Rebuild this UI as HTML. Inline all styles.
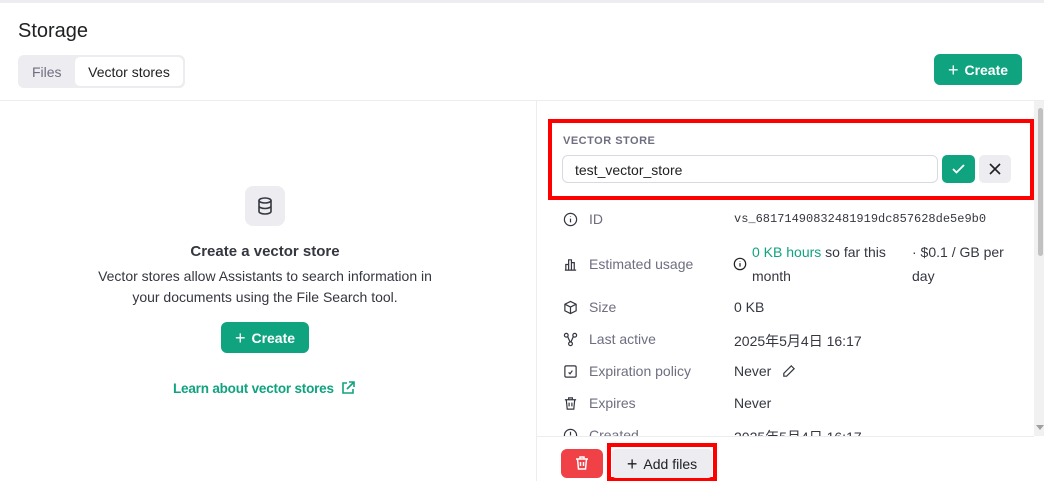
<!DOCTYPE html>
<html><head><meta charset="utf-8"><style>
*{box-sizing:border-box;margin:0;padding:0}
body{width:1044px;height:481px;overflow:hidden;background:#fff;font-family:"Liberation Sans","Noto Sans CJK JP",sans-serif;color:#202123;position:relative}
.a{position:absolute}
.btn{background:#10a37f;color:#fff;border-radius:6px;font-size:14px;font-weight:bold;display:flex;align-items:center;justify-content:center}
.lbl{position:absolute;left:589px;font-size:14px;color:#6e6e80}
.val{position:absolute;left:734px;font-size:14px;color:#353740}
.ic{position:absolute;left:563px;width:15px;height:15px}
</style></head><body>
<div class="a" style="left:0;top:0;width:1044px;height:3px;background:#ececf1"></div>
<div class="a" style="left:18px;top:20px;font-size:20px;color:#202123">Storage</div>
<div class="a" style="left:18px;top:55px;width:167px;height:33px;background:#ececf1;border-radius:6px"></div>
<div class="a" style="left:32px;top:64px;font-size:14px;color:#6e6e80">Files</div>
<div class="a" style="left:75px;top:57px;width:108px;height:29px;background:#fff;border-radius:5px;font-size:14px;color:#202123;display:flex;align-items:center;justify-content:center">Vector stores</div>
<div class="a btn" style="left:934px;top:54px;width:88px;height:31px"><span style="font-size:18px;font-weight:normal;margin-right:6px;line-height:18px">+</span>Create</div>
<div class="a" style="left:0;top:100px;width:1044px;height:1px;background:#ececf1"></div>
<div class="a" style="left:536px;top:101px;width:1px;height:380px;background:#ececf1"></div>
<div class="a" style="left:245px;top:186px;width:40px;height:40px;background:#ececf1;border-radius:8px"></div>
<svg class="a" style="left:255px;top:196px" width="20" height="20" viewBox="0 0 20 20" fill="none" stroke="#353740" stroke-width="1.6"><ellipse cx="10" cy="4.5" rx="6" ry="2.5"/><path d="M4 4.5v11c0 1.4 2.7 2.5 6 2.5s6-1.1 6-2.5v-11M4 10c0 1.4 2.7 2.5 6 2.5s6-1.1 6-2.5"/></svg>
<div class="a" style="left:0;top:243px;width:530px;text-align:center;font-size:15px;font-weight:bold;color:#353740">Create a vector store</div>
<div class="a" style="left:0;top:266px;width:530px;text-align:center;font-size:14px;line-height:21px;color:#353740">Vector stores allow Assistants to search information in<br>your documents using the File Search tool.</div>
<div class="a btn" style="left:221px;top:322px;width:88px;height:31px"><span style="font-size:18px;font-weight:normal;margin-right:6px;line-height:18px">+</span>Create</div>
<div class="a" style="left:173px;top:381px;font-size:13.5px;font-weight:bold;color:#10a37f;letter-spacing:-0.2px">Learn about vector stores</div>
<svg class="a" style="left:341px;top:381px" width="14" height="14" viewBox="0 0 14 14" fill="none" stroke="#10a37f" stroke-width="1.6"><path d="M6 2H2v10h10V8M8 1h5v5M13 1L6 8"/></svg>
<div class="a" style="left:548px;top:119px;width:486px;height:81px;border:4px solid #f00"></div>
<div class="a" style="left:563px;top:135px;font-size:11px;font-weight:bold;color:#6e6e80;letter-spacing:0.5px">VECTOR STORE</div>
<div class="a" style="left:562px;top:155px;width:376px;height:28px;border:1px solid #d9d9e3;border-radius:6px;font-size:14px;padding:6px 12px;color:#202123">test_vector_store</div>
<div class="a" style="left:942px;top:155px;width:33px;height:28px;background:#10a37f;border-radius:5px"></div>
<svg class="a" style="left:951px;top:162px" width="15" height="14" viewBox="0 0 15 14" fill="none" stroke="#fff" stroke-width="1.8"><path d="M2 7l3.5 3.5L13 3"/></svg>
<div class="a" style="left:979px;top:155px;width:32px;height:28px;background:#ececf1;border-radius:5px"></div>
<svg class="a" style="left:989px;top:163px" width="12" height="12" viewBox="0 0 12 12" stroke="#202123" stroke-width="1.6"><path d="M1 1l10 10M11 1L1 11"/></svg>

<svg class="ic" style="top:212px" viewBox="0 0 16 16" fill="none" stroke="#353740" stroke-width="1.3"><circle cx="8" cy="8" r="6.5"/><path d="M8 7v4M8 4.5v.5"/></svg>
<div class="lbl" style="top:211px">ID</div>
<div class="val" style="top:212px;font-family:'Liberation Mono',monospace;font-size:12px">vs_68171490832481919dc857628de5e9b0</div>

<svg class="ic" style="top:257px" viewBox="0 0 16 16" fill="none" stroke="#353740" stroke-width="1.3"><path d="M2 14h12M3 14V8h3v6M6 14V3h3v11M9 14V6h3v8"/></svg>
<div class="lbl" style="top:256px">Estimated usage</div>
<svg class="a" style="left:733px;top:257px" width="14" height="14" viewBox="0 0 16 16" fill="none" stroke="#202123" stroke-width="1.4"><circle cx="8" cy="8" r="6.5"/><path d="M8 7v4M8 4.5v.5"/></svg>
<div class="a" style="left:752px;top:240px;font-size:14px;line-height:24px;color:#353740;width:140px"><span style="color:#10a37f">0 KB hours</span> so far this month</div>
<div class="a" style="left:912px;top:240px;font-size:14px;line-height:24px;color:#353740;width:100px">· $0.1 / GB per day</div>

<svg class="ic" style="top:300px" viewBox="0 0 16 16" fill="none" stroke="#353740" stroke-width="1.3"><path d="M8 1.5l6 3v7l-6 3-6-3v-7zM2 4.5l6 3 6-3M8 7.5v7"/></svg>
<div class="lbl" style="top:299px">Size</div>
<div class="val" style="top:299px">0 KB</div>

<svg class="ic" style="top:332px" viewBox="0 0 16 16" fill="none" stroke="#353740" stroke-width="1.3"><circle cx="3.5" cy="3.5" r="2"/><circle cx="12.5" cy="3.5" r="2"/><circle cx="8" cy="12.5" r="2"/><path d="M5 5l2.5 5.5M11 5l-2.5 5.5"/></svg>
<div class="lbl" style="top:331px">Last active</div>
<div class="val" style="top:331px">2025年5月4日 16:17</div>

<svg class="ic" style="top:364px" viewBox="0 0 16 16" fill="none" stroke="#353740" stroke-width="1.3"><rect x="2" y="2" width="12" height="12" rx="1.5"/><path d="M6 9l1.5 1.5L10 7"/></svg>
<div class="lbl" style="top:363px">Expiration policy</div>
<div class="val" style="top:363px">Never</div>
<svg class="a" style="left:781px;top:364px" width="15" height="15" viewBox="0 0 16 16" fill="none" stroke="#353740" stroke-width="1.3"><path d="M11 2l3 3-8 8H3v-3z"/></svg>

<svg class="ic" style="top:396px" viewBox="0 0 16 16" fill="none" stroke="#353740" stroke-width="1.3"><path d="M2 4h12M6 4V2h4v2M3.5 4l1 10h7l1-10M6.5 7v4M9.5 7v4"/></svg>
<div class="lbl" style="top:395px">Expires</div>
<div class="val" style="top:395px">Never</div>

<div class="a" style="left:537px;top:420px;width:497px;height:16px;overflow:hidden">
<svg class="a" style="left:26px;top:8px" width="15" height="15" viewBox="0 0 16 16" fill="none" stroke="#353740" stroke-width="1.3"><circle cx="8" cy="8" r="6.5"/><path d="M8 4v4"/></svg>
<div class="a" style="left:52px;top:7px;font-size:14px;color:#6e6e80">Created</div>
<div class="a" style="left:197px;top:7px;font-size:14px;color:#353740">2025年5月4日 16:17</div>
</div>
<div class="a" style="left:537px;top:436px;width:497px;height:1px;background:#ececf1"></div>
<div class="a" style="left:1034px;top:101px;width:10px;height:335px;background:#f1f1f1"></div>
<div class="a" style="left:1038px;top:108px;width:5px;height:148px;background:#c1c1c1;border-radius:3px"></div>
<div class="a" style="left:1036px;top:425px;width:0;height:0;border-left:4px solid transparent;border-right:4px solid transparent;border-top:5px solid #a0a0a0"></div>
<div class="a" style="left:561px;top:449px;width:42px;height:29px;background:#ef4146;border-radius:6px"></div>
<svg class="a" style="left:574px;top:455px" width="16" height="16" viewBox="0 0 16 16" fill="none" stroke="#fff" stroke-width="1.5"><path d="M2 4h12M6 4V2h4v2M3.5 4l1 10h7l1-10M6.5 7v4M9.5 7v4"/></svg>
<div class="a" style="left:607px;top:443px;width:110px;height:38px;border:4px solid #f00"></div>
<div class="a" style="left:612px;top:449px;width:100px;height:29px;background:#ececf1;border-radius:4px;font-size:14px;color:#202123;display:flex;align-items:center;justify-content:center"><span style="font-size:18px;margin-right:6px;line-height:18px">+</span>Add files</div>
</body></html>
